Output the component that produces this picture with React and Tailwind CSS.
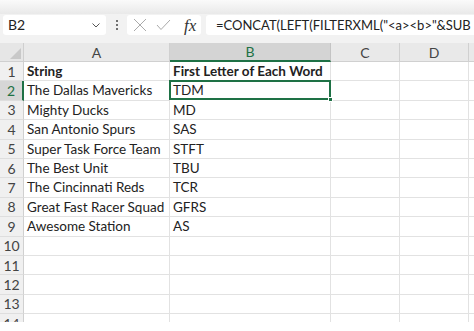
const rows = [
  ["String", "First Letter of Each Word", true],
  ["The Dallas Mavericks", "TDM"],
  ["Mighty Ducks", "MD"],
  ["San Antonio Spurs", "SAS"],
  ["Super Task Force Team", "STFT"],
  ["The Best Unit", "TBU"],
  ["The Cincinnati Reds", "TCR"],
  ["Great Fast Racer Squad", "GFRS"],
  ["Awesome Station", "AS"],
  ["", ""],
  ["", ""],
  ["", ""],
  ["", ""],
  ["", ""],
];

function Cell({ children, className = "" }) {
  return (
    <div className={`h-[19.4px] border-r border-b border-[#e2e2e2] flex items-center overflow-hidden whitespace-nowrap ${className}`}>
      {children}
    </div>
  );
}

export default function App() {
  return (
    <div className="w-[474px] h-[331px] bg-white overflow-hidden text-[#222]" style={{ fontFamily: "Lato, 'Open Sans', sans-serif" }}>
      <div className="h-[14px] bg-gradient-to-b from-[#fafafa] to-[#e9e9e9]" />
      <div className="h-[29px] bg-[#f2f2f2] flex items-start pt-[1px] pl-[3px]">
        <div className="w-[103px] h-[20px] bg-white rounded-[3px] flex items-center justify-between pl-[5px] pr-[5px]">
          <span className="text-[14px] leading-none">B2</span>
          <svg width="10" height="10" viewBox="0 0 10 10" className="text-[#555]">
            <path d="M1.5 3.5 L5 7 L8.5 3.5" fill="none" stroke="currentColor" strokeWidth="1" />
          </svg>
        </div>
        <div className="w-[21px] h-[20px] flex flex-col items-center justify-center gap-[2px]">
          <span className="w-[2px] h-[2px] bg-[#444] rounded-full" />
          <span className="w-[2px] h-[2px] bg-[#444] rounded-full" />
          <span className="w-[2px] h-[2px] bg-[#444] rounded-full" />
        </div>
        <div className="w-[74px] h-[20px] bg-white rounded-[3px] flex items-center pl-[6px] gap-[9px]">
          <svg width="14" height="14" viewBox="0 0 14 14">
            <path d="M1 1 L13 13 M13 1 L1 13" stroke="#aaa" strokeWidth="1" fill="none" />
          </svg>
          <svg width="15" height="12" viewBox="0 0 15 12">
            <path d="M1 6 L5 10.5 L14 1" stroke="#aaa" strokeWidth="1" fill="none" />
          </svg>
          <span className="text-[17px] leading-none italic text-[#333] ml-[4px]" style={{ fontFamily: "'Liberation Serif', serif" }}>fx</span>
        </div>
        <div className="flex-1 h-[20px] bg-white rounded-l-[3px] ml-[5px] flex items-center pl-[10px] overflow-hidden whitespace-nowrap">
          <span className="text-[13px] leading-none text-[#222]">=CONCAT(LEFT(FILTERXML("&lt;a&gt;&lt;b&gt;"&amp;SUB</span>
        </div>
      </div>
      <div className="h-[279px] overflow-hidden">
        <div className="grid grid-cols-[24px_146px_161px_69px_69px_1fr] text-[13.5px]">
          <div className="h-[19px] bg-[#e6e6e6] border-r border-b border-[#cfcfcf] relative">
            <div className="absolute right-[2px] bottom-[2px] w-0 h-0 border-l-[11px] border-l-transparent border-b-[11px] border-b-[#c8c8c8]" />
          </div>
          <div className="h-[19px] bg-[#e9e9e9] border-r border-b border-[#d0d0d0] flex items-center justify-center text-[#444] text-[14px]">A</div>
          <div className="h-[19px] bg-[#d4d4d4] border-r border-b-2 border-r-[#c4c4c4] border-b-[#1e7145] flex items-center justify-center text-[#1e7145] text-[14px]">B</div>
          <div className="h-[19px] bg-[#e9e9e9] border-r border-b border-[#d0d0d0] flex items-center justify-center text-[#444] text-[14px]">C</div>
          <div className="h-[19px] bg-[#e9e9e9] border-r border-b border-[#d0d0d0] flex items-center justify-center text-[#444] text-[14px]">D</div>
          <div className="h-[19px] bg-[#e9e9e9] border-b border-[#d0d0d0]" />
          {rows.map((r, i) => {
            const n = i + 1;
            const sel = n === 2;
            return [
              <div key={`h${n}`} className={`h-[19.4px] border-b border-[#dedede] flex items-center justify-center text-[14px] ${sel ? "bg-[#d6d6d6] text-[#1e7145] border-r-2 border-r-[#1e7145]" : "bg-[#f0f0f0] text-[#444] border-r border-r-[#d0d0d0]"}`}>
                {n}
              </div>,
              <Cell key={`a${n}`} className={`pl-[3px] ${r[2] ? "font-bold" : ""}`}>{r[0]}</Cell>,
              sel ? (
                <div key={`b${n}`} className="h-[19.4px] relative border-2 border-[#1e7145] -mt-[1px] -ml-[1px] flex items-center pl-[2px]">
                  {r[1]}
                  <div className="absolute -right-[4px] -bottom-[4px] w-[5px] h-[5px] bg-[#1e7145] border border-white" />
                </div>
              ) : (
                <Cell key={`b${n}`} className={`pl-[3px] ${r[2] ? "font-bold" : ""}`}>{r[1]}</Cell>
              ),
              <Cell key={`c${n}`} />,
              <Cell key={`d${n}`} />,
              <Cell key={`e${n}`} className="border-r-0" />,
            ];
          })}
        </div>
      </div>
    </div>
  );
}
